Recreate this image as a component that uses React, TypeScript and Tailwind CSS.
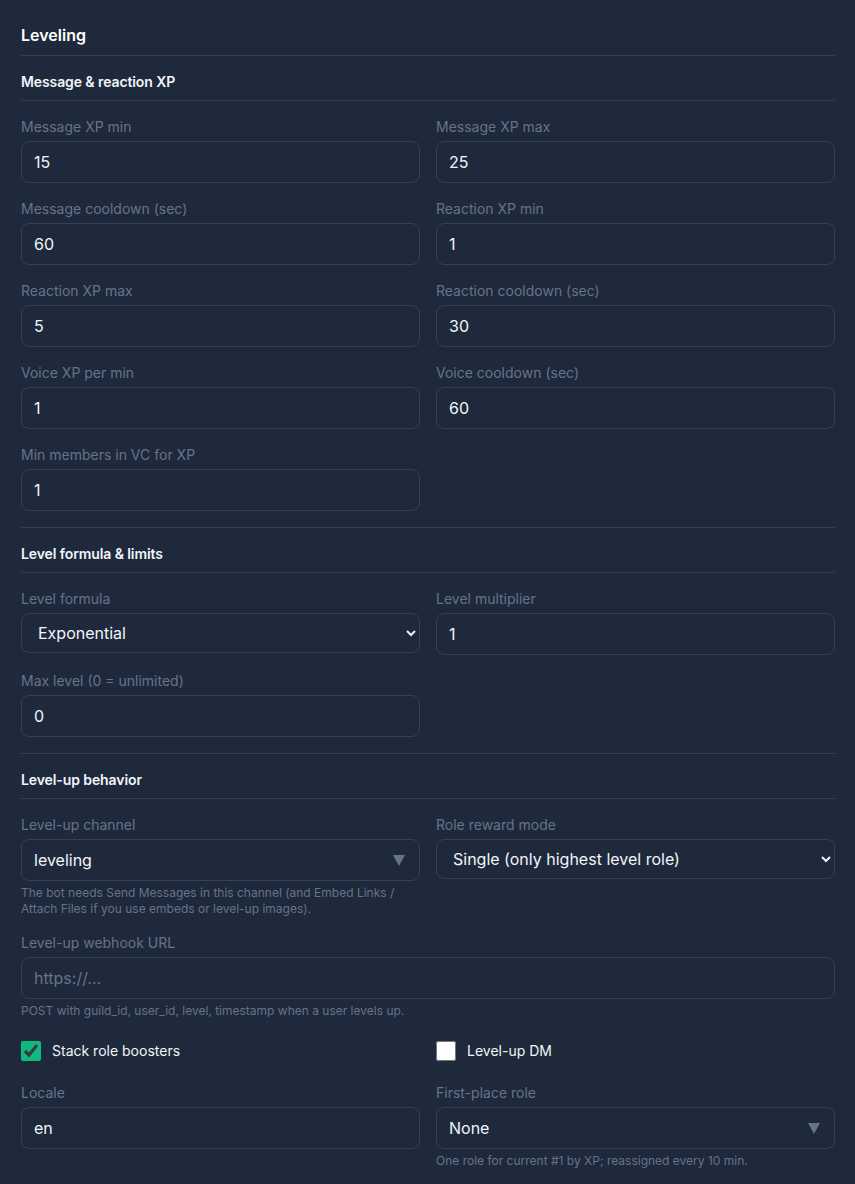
import React from "react";

const labelCls = "block text-sm leading-5 text-[#64748b] mb-1";
const inputCls =
  "block w-full h-[42px] rounded-lg border border-[#334155] bg-[#1e293b] px-3 text-base leading-6 text-[#f1f5f9] placeholder-[#64748b] outline-none";
const selectCls =
  "block w-full h-10 rounded-lg border border-[#334155] bg-[#1e293b] px-3 text-base text-[#f1f5f9] outline-none [color-scheme:dark]";
const helpCls = "mt-1 text-xs leading-4 text-[#64748b]";

function Field({ label, value, placeholder }: { label: string; value?: string; placeholder?: string }) {
  return (
    <div>
      <label className={labelCls}>{label}</label>
      <input className={inputCls} defaultValue={value} placeholder={placeholder} />
    </div>
  );
}

function NativeSelect({ label, value }: { label: string; value: string }) {
  return (
    <div>
      <label className={labelCls}>{label}</label>
      <select className={selectCls} defaultValue={value}>
        <option value={value}>{value}</option>
      </select>
    </div>
  );
}

function CustomSelect({ value }: { value: string }) {
  return (
    <div className="flex h-[42px] w-full items-center justify-between rounded-lg border border-[#334155] bg-[#1e293b] pl-3 pr-[14px]">
      <span className="text-base leading-6 text-[#f1f5f9]">{value}</span>
      <svg width="12" height="11" viewBox="0 0 12 11">
        <polygon points="0,0 12,0 6,11" fill="#64748b" />
      </svg>
    </div>
  );
}

function SectionTitle({ title, top }: { title: string; top?: boolean }) {
  return (
    <div className={top ? "mt-4 border-t border-[#334155]" : ""}>
      <h3 className="pt-4 pb-2 border-b border-[#334155] text-sm leading-5 font-semibold tracking-[-0.1px] text-[#f1f5f9]">
        {title}
      </h3>
    </div>
  );
}

export default function App() {
  return (
    <div className="min-h-screen bg-[#1e293b] pl-[21px] pr-5 pt-[23px] pb-4 font-[Inter,sans-serif]">
      <h2 className="border-b border-[#334155] pb-2 text-base leading-6 font-semibold text-white">Leveling</h2>

      <SectionTitle title="Message & reaction XP" />
      <div className="mt-4 grid grid-cols-2 gap-x-4 gap-y-4">
        <Field label="Message XP min" value="15" />
        <Field label="Message XP max" value="25" />
        <Field label="Message cooldown (sec)" value="60" />
        <Field label="Reaction XP min" value="1" />
        <Field label="Reaction XP max" value="5" />
        <Field label="Reaction cooldown (sec)" value="30" />
        <Field label="Voice XP per min" value="1" />
        <Field label="Voice cooldown (sec)" value="60" />
        <Field label="Min members in VC for XP" value="1" />
      </div>

      <SectionTitle title="Level formula & limits" top />
      <div className="mt-4 grid grid-cols-2 gap-x-4 gap-y-4">
        <NativeSelect label="Level formula" value="Exponential" />
        <Field label="Level multiplier" value="1" />
        <Field label="Max level (0 = unlimited)" value="0" />
      </div>

      <SectionTitle title="Level-up behavior" top />
      <div className="mt-4 grid grid-cols-2 gap-x-4 gap-y-4">
        <div>
          <label className={labelCls}>Level-up channel</label>
          <CustomSelect value="leveling" />
          <p className={helpCls}>
            The bot needs Send Messages in this channel (and Embed Links / Attach Files if you use embeds or level-up
            images).
          </p>
        </div>
        <NativeSelect label="Role reward mode" value="Single (only highest level role)" />
        <div className="col-span-2">
          <label className={labelCls}>Level-up webhook URL</label>
          <input className={inputCls} placeholder="https://..." />
          <p className={helpCls}>POST with guild_id, user_id, level, timestamp when a user levels up.</p>
        </div>
        <label className="flex h-8 items-center gap-[11px]">
          <input type="checkbox" defaultChecked className="h-5 w-5 m-0 accent-[#10b981]" />
          <span className="text-sm leading-5 text-[#f1f5f9]">Stack role boosters</span>
        </label>
        <label className="flex h-8 items-center gap-[11px]">
          <input type="checkbox" className="h-5 w-5 m-0 accent-[#10b981]" />
          <span className="text-sm leading-5 text-[#f1f5f9]">Level-up DM</span>
        </label>
        <Field label="Locale" value="en" />
        <div>
          <label className={labelCls}>First-place role</label>
          <CustomSelect value="None" />
          <p className={helpCls}>One role for current #1 by XP; reassigned every 10 min.</p>
        </div>
      </div>
    </div>
  );
}
